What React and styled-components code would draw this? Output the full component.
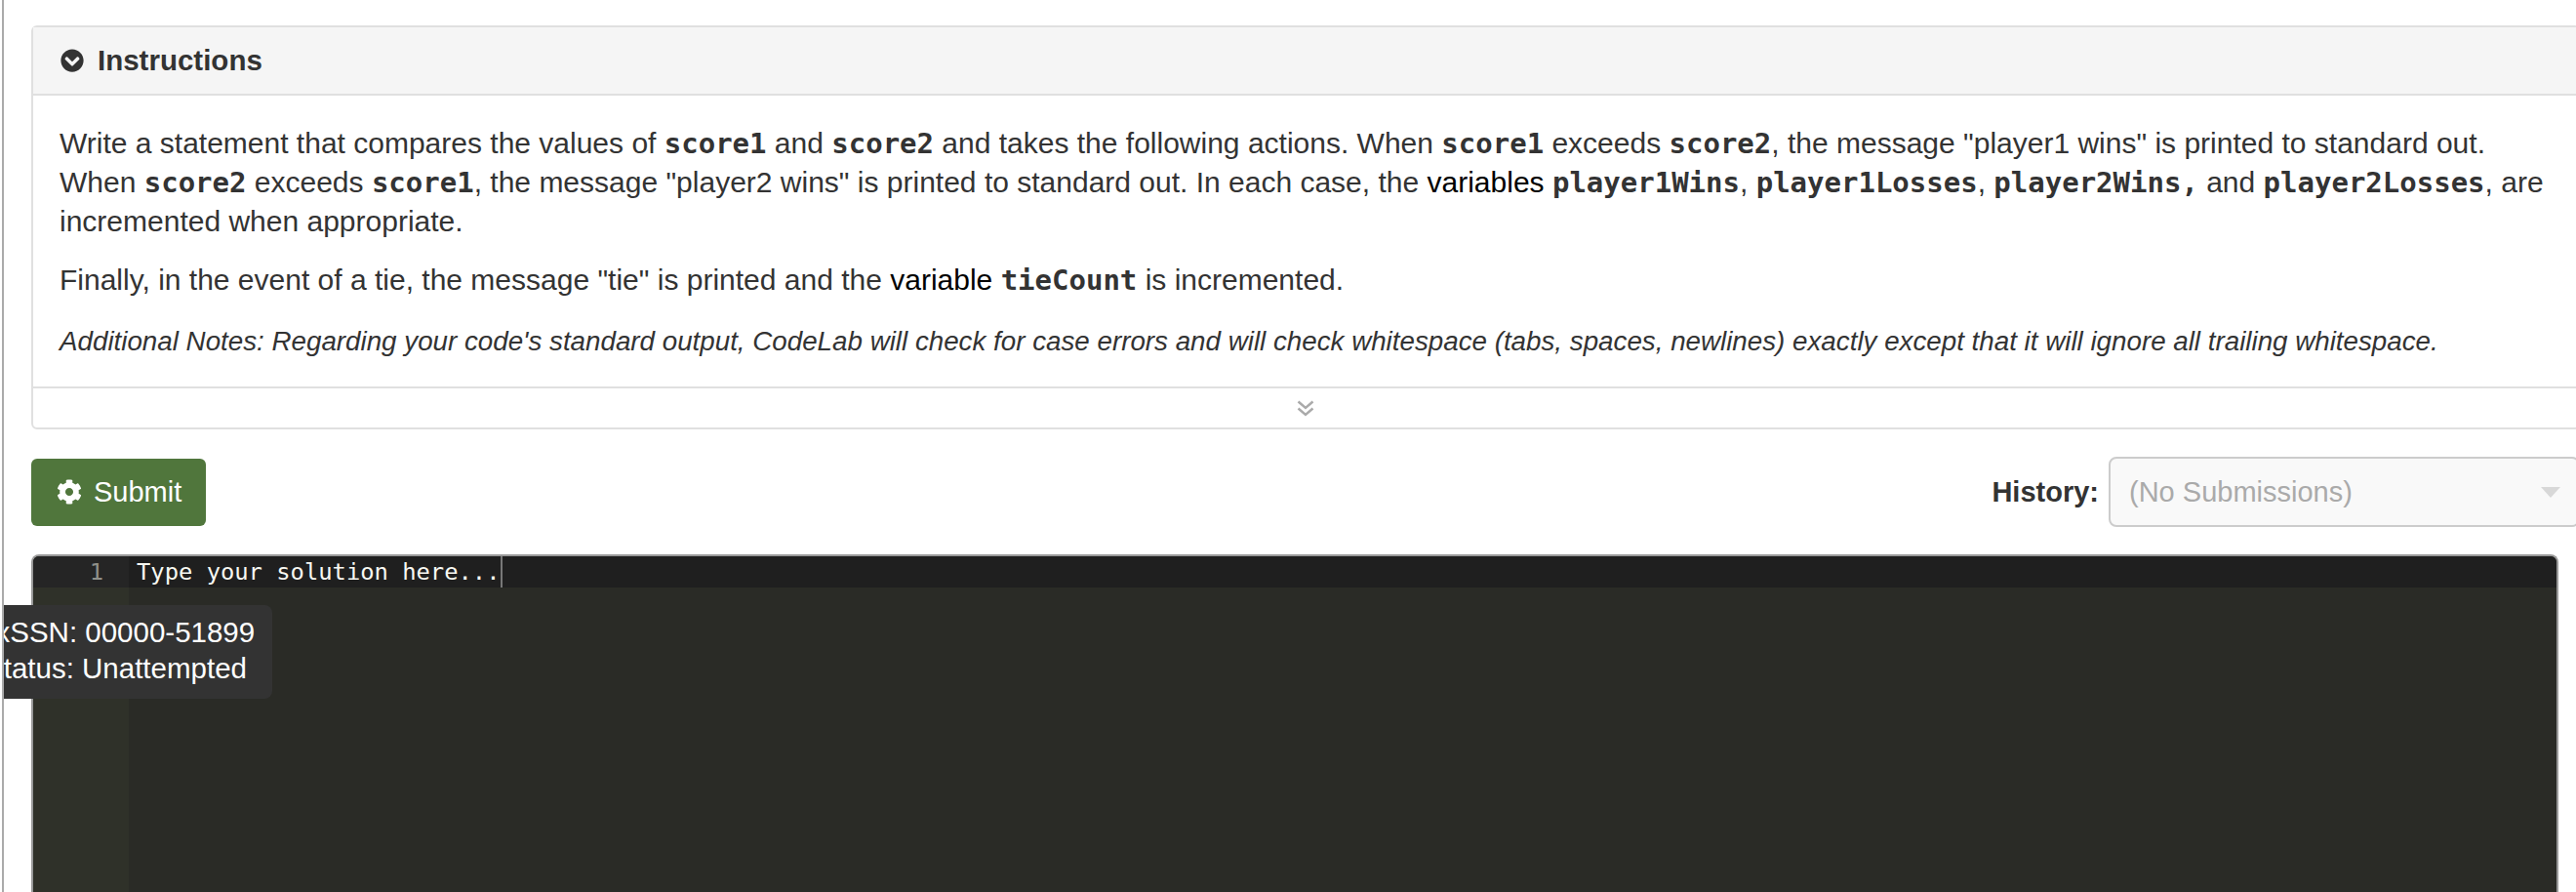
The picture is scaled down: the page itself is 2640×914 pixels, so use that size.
import React from "react";
import styled, {createGlobalStyle} from "styled-components";
import {FaChevronCircleDown, FaCog} from "react-icons/fa";

const GlobalStyle = createGlobalStyle`
  html, body {
    margin: 0;
    padding: 0;
    background: #fff;
    overflow: hidden;
  }
  body {
    font-family: "Liberation Sans", Arial, sans-serif;
    font-size: 29px;
    line-height: 40px;
    color: #333;
  }
`;

const Page = styled.div`
  position: relative;
  width: 2640px;
  height: 914px;
  overflow: hidden;
  box-sizing: border-box;
  margin-left: 2px;
  border-left: 2px solid #aaa;
  padding: 26px 0 0 28px;
`;

const Card = styled.section`
  width: 2612px;
  box-sizing: border-box;
  border: 2px solid #e0e0e0;
  border-radius: 6px;
`;

const CardHeader = styled.header`
  display: flex;
  align-items: center;
  gap: 14px;
  height: 68px;
  padding: 0 28px;
  background: #f5f5f5;
  border-bottom: 2px solid #e0e0e0;
  font-weight: 700;
  font-size: 29.5px;
  svg {
    width: 24px;
    height: 24px;
  }
`;

const CardBody = styled.div`
  padding: 29px 28px 26px 27px;
  border-bottom: 2px solid #e0e0e0;
  font-size: 30px;
`;

const Para = styled.p`
  margin: 0 0 20px;
`;

const NotePara = styled.p`
  margin: 23px 0 0;
  font-size: 27.75px;
  font-style: italic;
`;

const Code = styled.code`
  font-family: "DejaVu Sans Mono", monospace;
  font-weight: 700;
  font-size: 29px;
`;

const Dark = styled.span`
  color: #000;
`;

const CardFooter = styled.div`
  display: flex;
  align-items: center;
  justify-content: center;
  height: 40px;
`;

const Toolbar = styled.div`
  display: flex;
  align-items: center;
  justify-content: space-between;
  width: 2612px;
  margin-top: 28px;
`;

const SubmitButton = styled.button`
  display: flex;
  align-items: center;
  gap: 12px;
  height: 69px;
  padding: 0 25px 0 26px;
  border: 0;
  border-radius: 6px;
  background: #50763c;
  color: #fff;
  font: inherit;
  svg {
    width: 26px;
    height: 26px;
  }
`;

const History = styled.div`
  display: flex;
  align-items: center;
  gap: 10px;
`;

const HistoryLabel = styled.label`
  font-weight: 700;
`;

const Select = styled.div`
  display: flex;
  align-items: center;
  justify-content: space-between;
  width: 483px;
  height: 72px;
  box-sizing: border-box;
  padding: 0 18px 0 19px;
  border: 2px solid #ccc;
  border-radius: 8px;
  background: #f9f9f9;
  color: #aaa;
`;

const Caret = styled.span`
  width: 0;
  height: 0;
  border-left: 10px solid transparent;
  border-right: 10px solid transparent;
  border-top: 11px solid #d8d8d8;
`;

const Editor = styled.div`
  display: grid;
  grid-template-columns: 98px 1fr;
  width: 2586px;
  height: 360px;
  margin-top: 28px;
  border: 2px solid #999;
  border-bottom: 0;
  border-radius: 8px 8px 0 0;
  background: #2a2b26;
  font-family: "DejaVu Sans Mono", monospace;
  font-size: 23.8px;
  line-height: 32px;
  overflow: hidden;
`;

const Gutter = styled.div`
  background: #2f3129;
  color: #8f908a;
`;

const GutterCell = styled.div`
  height: 32px;
  padding-right: 26px;
  background: #252525;
  text-align: right;
`;

const CodeArea = styled.div`
  min-width: 0;
`;

const ActiveLine = styled.div`
  display: flex;
  height: 32px;
  padding-left: 8px;
  background: #1f1f1f;
  color: #f8f8f2;
`;

const Cursor = styled.span`
  width: 2px;
  background: #777;
`;

const Tooltip = styled.div`
  position: absolute;
  left: -46px;
  top: 620px;
  width: 321px;
  height: 96px;
  box-sizing: border-box;
  padding: 9px 0 0;
  border-radius: 8px;
  background: #333;
  color: #fff;
  font-size: 29.5px;
  line-height: 37px;
  text-align: center;
`;

const TooltipLine = styled.div`
  white-space: nowrap;
`;

function DoubleChevron() {
  return (
    <svg width="18" height="17" viewBox="0 0 18 17" fill="none" stroke="#aaa" strokeWidth="2.4">
      <path d="M1.5 1.5 9 8 16.5 1.5" />
      <path d="M1.5 8.5 9 15 16.5 8.5" />
    </svg>
  );
}

function App() {
  return (
    <Page>
      <GlobalStyle />
      <Card>
        <CardHeader>
          <FaChevronCircleDown />
          Instructions
        </CardHeader>
        <CardBody>
          <Para>
            Write a statement that compares the values of <Code>score1</Code> and <Code>score2</Code> and
            takes the following actions. When <Code>score1</Code> exceeds <Code>score2</Code>, the message
            "player1 wins" is printed to standard out. When <Code>score2</Code> exceeds <Code>score1</Code>,
            the message "player2 wins" is printed to standard out. In each case, the <Dark>variables</Dark>{" "}
            <Code>player1Wins</Code>, <Code>player1Losses</Code>, <Code>player2Wins,</Code> and{" "}
            <Code>player2Losses</Code>, are incremented when appropriate.
          </Para>
          <Para>
            Finally, in the event of a tie, the message "tie" is printed and the <Dark>variable</Dark>{" "}
            <Code>tieCount</Code> is incremented.
          </Para>
          <NotePara>
            Additional Notes: Regarding your code's standard output, CodeLab will check for case errors and
            will check whitespace (tabs, spaces, newlines) exactly except that it will ignore all trailing
            whitespace.
          </NotePara>
        </CardBody>
        <CardFooter>
          <DoubleChevron />
        </CardFooter>
      </Card>
      <Toolbar>
        <SubmitButton>
          <FaCog />
          Submit
        </SubmitButton>
        <History>
          <HistoryLabel>History:</HistoryLabel>
          <Select>
            (No Submissions)
            <Caret />
          </Select>
        </History>
      </Toolbar>
      <Editor>
        <Gutter>
          <GutterCell>1</GutterCell>
        </Gutter>
        <CodeArea>
          <ActiveLine>
            Type your solution here...
            <Cursor />
          </ActiveLine>
        </CodeArea>
      </Editor>
      <Tooltip>
        <TooltipLine>ExSSN: 00000-51899</TooltipLine>
        <TooltipLine>Status: Unattempted</TooltipLine>
      </Tooltip>
    </Page>
  );
}

export default App;
